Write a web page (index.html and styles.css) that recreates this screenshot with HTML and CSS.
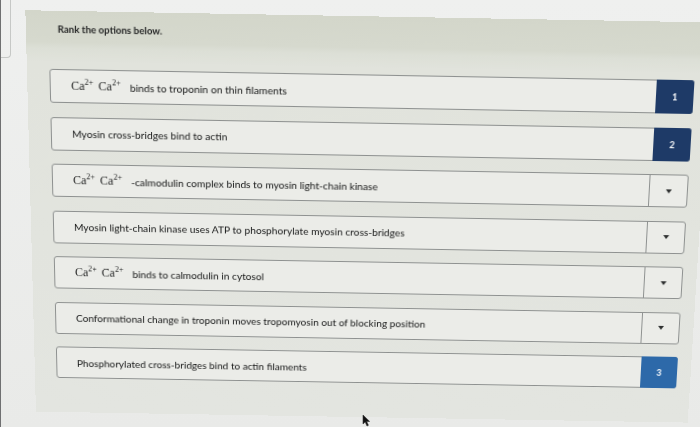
FILE: index.html
```html
<!DOCTYPE html>
<html lang="en">
<head>
<meta charset="utf-8">
<title>Rank the options</title>
<link rel="stylesheet" href="styles.css">
</head>
<body>
<div class="screen">
  <div class="side-tab"></div>

  <section class="panel">
    <div class="panel-head">Rank the options below.</div>

    <ol class="rank-list">
      <li class="rank-row">
        <div class="rank-text"><span class="ion">Ca<sup>2+</sup></span> <span class="ion">Ca<sup>2+</sup></span> <span class="label">binds to troponin on thin filaments</span></div>
        <div class="rank-slot rank-slot--set">1</div>
      </li>
      <li class="rank-row">
        <div class="rank-text"><span class="label">Myosin cross-bridges bind to actin</span></div>
        <div class="rank-slot rank-slot--set">2</div>
      </li>
      <li class="rank-row">
        <div class="rank-text"><span class="ion">Ca<sup>2+</sup></span> <span class="ion">Ca<sup>2+</sup></span> <span class="label">-calmodulin complex binds to myosin light-chain kinase</span></div>
        <div class="rank-slot"><span class="caret"></span></div>
      </li>
      <li class="rank-row">
        <div class="rank-text"><span class="label">Myosin light-chain kinase uses ATP to phosphorylate myosin cross-bridges</span></div>
        <div class="rank-slot"><span class="caret"></span></div>
      </li>
      <li class="rank-row">
        <div class="rank-text"><span class="ion">Ca<sup>2+</sup></span> <span class="ion">Ca<sup>2+</sup></span> <span class="label">binds to calmodulin in cytosol</span></div>
        <div class="rank-slot"><span class="caret"></span></div>
      </li>
      <li class="rank-row">
        <div class="rank-text"><span class="label">Conformational change in troponin moves tropomyosin out of blocking position</span></div>
        <div class="rank-slot"><span class="caret"></span></div>
      </li>
      <li class="rank-row">
        <div class="rank-text"><span class="label">Phosphorylated cross-bridges bind to actin filaments</span></div>
        <div class="rank-slot rank-slot--set is-hover">3</div>
      </li>
    </ol>
  </section>

  <!-- mouse pointer resting below the list -->
  <svg class="pointer" width="9" height="13" viewBox="0 0 9 13" aria-hidden="true">
    <path d="M1 1 L1 10 L3.2 8 L5 12 L6.4 11.3 L4.7 7.4 L7.6 7.4 Z" fill="#111" stroke="#333" stroke-width="0.6" stroke-linejoin="round"/>
  </svg>
</div>
</body>
</html>
```

FILE: styles.css
```css
html,
body {
  margin: 0;
  height: 100%;
}

body {
  background: #eceeeb;
  font-family: Lato, "Open Sans", sans-serif;
  overflow: hidden;
}

.screen {
  position: relative;
  display: flex;
  align-items: flex-start;
  height: 427px;
  box-sizing: border-box;
  border-left: 1px solid #6f7071;
  background: linear-gradient(180deg, #eff0ef 0%, #e9eae8 100%);
  overflow: hidden;
}

/* collapsed side card peeking in at the top left */
.side-tab {
  flex: 0 0 9px;
  height: 57px;
  border-right: 1px solid #c6c8c6;
  border-bottom: 1px solid #c6c8c6;
  border-bottom-right-radius: 4px;
}

/* question card, seen slightly tilted on the display */
.panel {
  flex: 1;
  height: 404px;
  margin: 20px 0 0 20px;
  background: linear-gradient(180deg, #d3d6ca 0, #d6d9ce 30px, #dcdfd6 36px, #e1e3dc 50px, #e3e5e0 100%);
  transform-origin: 50% 50%;
  transform: perspective(1000px) rotateX(-7.5deg) rotate(1deg);
}

.panel-head {
  height: 30px;
  padding: 4px 0 0 31px;
  box-sizing: border-box;
  display: flex;
  align-items: center;
  font-size: 9.5px;
  font-weight: 700;
  color: #252626;
}

.rank-list {
  list-style: none;
  margin: 0;
  padding: 26px 14px 0 22px;
  display: flex;
  flex-direction: column;
  gap: 13.5px;
}

.rank-row {
  display: flex;
  height: 33px;
  box-sizing: border-box;
  border: 1px solid #8e9190;
  border-radius: 3px;
  background: #ebece8;
}

.rank-text {
  flex: 1;
  display: flex;
  align-items: center;
  gap: 5px;
  padding-left: 20px;
  font-size: 10.2px;
  color: #161717;
  white-space: nowrap;
}

.ion + .label {
  margin-left: 4px;
}

.ion {
  font-family: "Liberation Serif", "Times New Roman", serif;
  font-size: 12px;
  color: #232424;
}

.ion sup {
  font-size: 8px;
  line-height: 0;
  vertical-align: 5px;
}

.rank-slot {
  flex: 0 0 37px;
  display: flex;
  align-items: center;
  justify-content: center;
  border-left: 1px solid #8e9190;
}

.caret {
  width: 0;
  height: 0;
  border-left: 3.5px solid transparent;
  border-right: 3.5px solid transparent;
  border-top: 4px solid #2e3030;
}

.rank-slot--set {
  margin: -1px -1px -1px 0;
  border-left: 0;
  border-radius: 0 3px 3px 0;
  background: #1e3a67;
  color: #ffffff;
  font-size: 9px;
  font-weight: 700;
}

.rank-slot--set.is-hover {
  background: #2d69a9;
}

.pointer {
  position: absolute;
  left: 361px;
  top: 414px;
}
```
